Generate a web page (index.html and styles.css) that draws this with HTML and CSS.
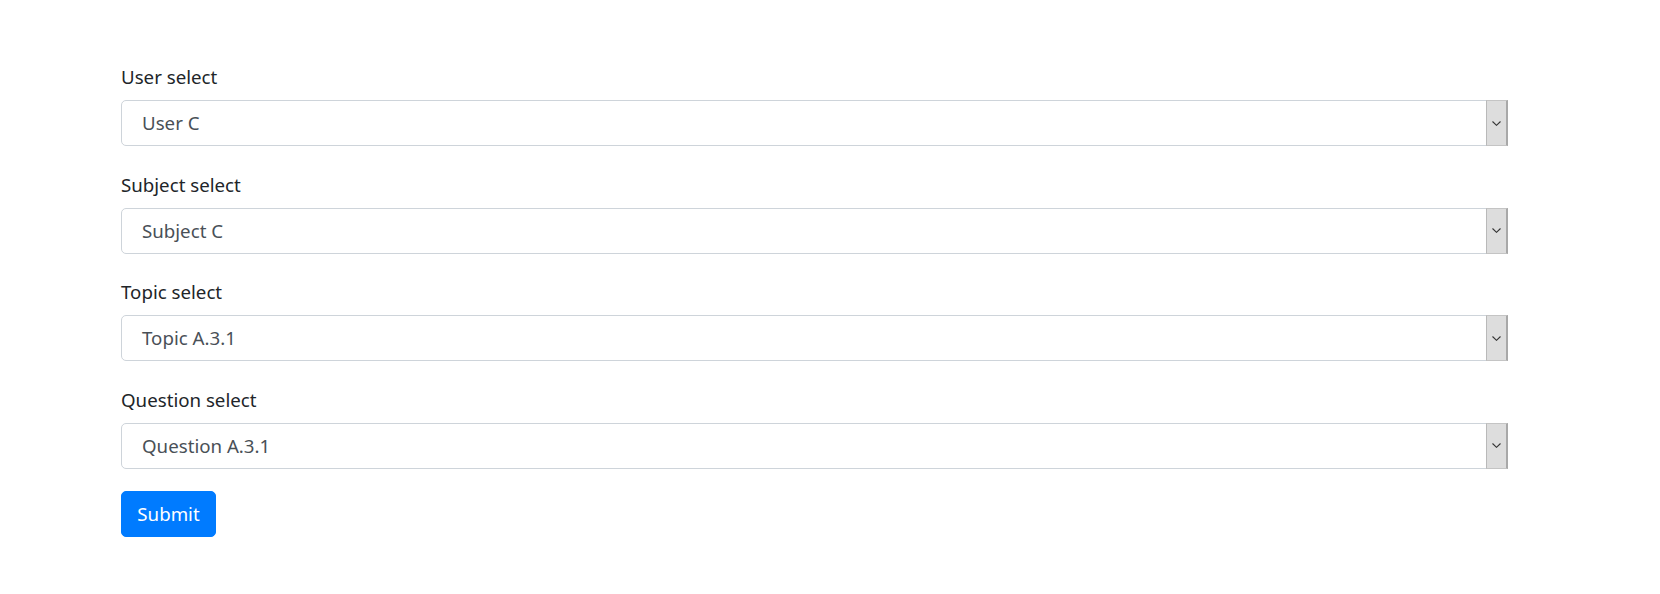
FILE: index.html
```html
<!DOCTYPE html>
<html lang="en">
<head>
<meta charset="utf-8">
<title>Form</title>
<link rel="stylesheet" href="styles.css">
</head>
<body>
<div class="page">
  <form class="form">
    <div class="group">
      <label class="label">User select</label>
      <div class="select">
        <span class="value">User C</span>
        <span class="arrow"><svg width="9" height="5" viewBox="0 0 9 5"><polyline points="0.5,0.5 4.5,4.3 8.5,0.5" fill="none" stroke="#333333" stroke-width="1.1"/></svg></span>
      </div>
    </div>
    <div class="group">
      <label class="label">Subject select</label>
      <div class="select">
        <span class="value">Subject C</span>
        <span class="arrow"><svg width="9" height="5" viewBox="0 0 9 5"><polyline points="0.5,0.5 4.5,4.3 8.5,0.5" fill="none" stroke="#333333" stroke-width="1.1"/></svg></span>
      </div>
    </div>
    <div class="group">
      <label class="label">Topic select</label>
      <div class="select">
        <span class="value">Topic A.3.1</span>
        <span class="arrow"><svg width="9" height="5" viewBox="0 0 9 5"><polyline points="0.5,0.5 4.5,4.3 8.5,0.5" fill="none" stroke="#333333" stroke-width="1.1"/></svg></span>
      </div>
    </div>
    <div class="group last">
      <label class="label">Question select</label>
      <div class="select">
        <span class="value">Question A.3.1</span>
        <span class="arrow"><svg width="9" height="5" viewBox="0 0 9 5"><polyline points="0.5,0.5 4.5,4.3 8.5,0.5" fill="none" stroke="#333333" stroke-width="1.1"/></svg></span>
      </div>
    </div>
    <button type="button" class="btn">Submit</button>
  </form>
</div>
</body>
</html>
```
FILE: styles.css
```css
* { box-sizing: border-box; }
html, body { margin: 0; padding: 0; background: #ffffff; }
body {
  font-family: "Noto Sans", "Open Sans", sans-serif;
  font-size: 18.7px;
  color: #212529;
}
.page {
  padding: 62px 0 0 121px;
}
.form {
  width: 1387px;
  display: flex;
  flex-direction: column;
  align-items: flex-start;
}
.group {
  width: 100%;
  margin-bottom: 23.5px;
  display: flex;
  flex-direction: column;
}
.group.last { margin-bottom: 22px; }
.label {
  display: block;
  line-height: 29px;
  height: 29px;
  margin-bottom: 9px;
  color: #212529;
}
.select {
  height: 46px;
  border: 1px solid #ced4da;
  border-radius: 5px;
  display: flex;
  align-items: stretch;
  background: #fff;
}
.value {
  flex: 1;
  padding-left: 20px;
  display: flex;
  align-items: center;
  color: #495057;
  padding-bottom: 1px;
}
.arrow {
  width: 22px;
  margin: -1px -1px -1px 0;
  background: #dddddd;
  border-left: 1px solid #b9b9b9;
  border-right: 2px solid #a8a8a8;
  border-top: 1px solid #c4c4c4;
  border-bottom: 1px solid #c4c4c4;
  display: flex;
  align-items: center;
  justify-content: center;
}
.arrow svg { display: block; }
.btn {
  height: 46px;
  width: 95px;
  border: 1px solid #007bff;
  background: #007bff;
  color: #ffffff;
  border-radius: 5px;
  font-family: inherit;
  font-size: 18.7px;
  padding: 0;
  cursor: pointer;
}
```
